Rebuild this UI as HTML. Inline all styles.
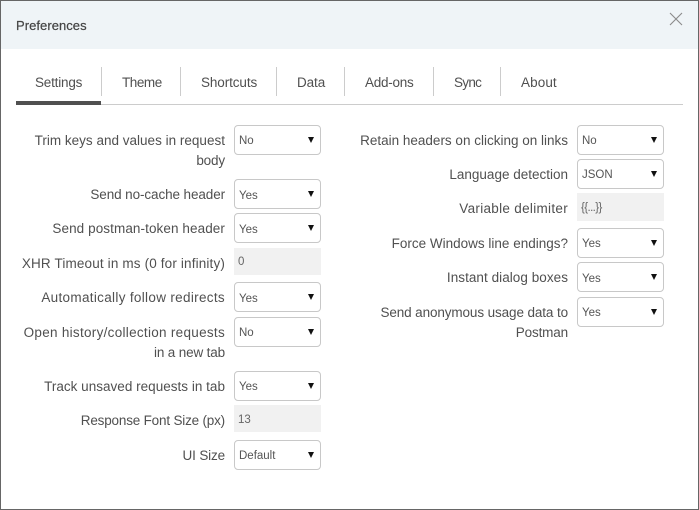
<!DOCTYPE html>
<html><head><meta charset="utf-8">
<style>
html,body{margin:0;padding:0;background:#fff}
#w{position:relative;width:699px;height:510px;overflow:hidden;background:#fff;font-family:"Liberation Sans",sans-serif;color:#505050}
#b{position:absolute;left:0;top:0;width:697px;height:508px;border:1px solid #666}
#h{position:absolute;left:1px;top:1px;width:697px;height:48px;background:#eff4f7}
.a{position:absolute;white-space:nowrap}
.t{font-size:13.5px;line-height:18px;top:74px;letter-spacing:-.1px}
.s{position:absolute;width:1px;height:29px;top:67px;background:#ccc}
.l{position:absolute;font-size:13.5px;line-height:20px;text-align:right;white-space:nowrap;letter-spacing:-.15px;margin-top:1px}
.c{position:absolute;width:85px;height:28px;border:1px solid #c8c8c8;border-radius:4px;background:#fff;font-size:11.5px;line-height:28px;color:#555}
.c span{position:absolute;left:4px;top:1px}
.c span.d{top:2px}
.c i{position:absolute;left:73px;top:11px;width:0;height:0;border-left:3.5px solid transparent;border-right:3.5px solid transparent;border-top:6.5px solid #111}
.n{position:absolute;width:87px;height:27px;background:#f1f1f1;font-size:11.5px;line-height:26px;color:#666}
.n span{position:absolute;left:4px;top:1px}
</style></head><body>
<div id="w">
<div id="b"></div>
<div id="h"></div>
<div class="a" style="left:16px;top:17px;font-size:13px;line-height:18px;letter-spacing:.05px;color:#444;-webkit-text-stroke:.2px #444">Preferences</div>
<svg class="a" style="left:669px;top:12px" width="14" height="14" viewBox="0 0 14 14"><path d="M1 1L13 13M13 1L1 13" stroke="#8a8a8a" stroke-width="1.1" fill="none"/></svg>

<div class="a t" style="left:35px;letter-spacing:-.2px">Settings</div>
<div class="a t" style="left:122px;letter-spacing:-.45px">Theme</div>
<div class="a t" style="left:201px">Shortcuts</div>
<div class="a t" style="left:297px">Data</div>
<div class="a t" style="left:365px;letter-spacing:-.25px">Add-ons</div>
<div class="a t" style="left:454px;letter-spacing:-.7px">Sync</div>
<div class="a t" style="left:521px;letter-spacing:.1px">About</div>
<div class="s" style="left:101px"></div>
<div class="s" style="left:180px"></div>
<div class="s" style="left:276px"></div>
<div class="s" style="left:344px"></div>
<div class="s" style="left:433px"></div>
<div class="s" style="left:500px"></div>
<div class="a" style="left:16px;top:104px;width:667px;height:1px;background:#ccc"></div>
<div class="a" style="left:16px;top:101px;width:85px;height:4px;background:#505050"></div>

<div class="l" style="right:474px;top:130px"><span style="letter-spacing:.01px">Trim keys and values in request</span><br>body</div>
<div class="c" style="left:234px;top:125px"><span>No</span><i></i></div>
<div class="l" style="right:474px;top:184px;letter-spacing:-.1px">Send no-cache header</div>
<div class="c" style="left:234px;top:179px"><span class="d">Yes</span><i></i></div>
<div class="l" style="right:474px;top:218px;letter-spacing:.09px">Send postman-token header</div>
<div class="c" style="left:234px;top:213px"><span class="d">Yes</span><i></i></div>
<div class="l" style="right:474px;top:253px;letter-spacing:.15px">XHR Timeout in ms (0 for infinity)</div>
<div class="n" style="left:234px;top:248px"><span>0</span></div>
<div class="l" style="right:474px;top:287px;letter-spacing:.32px">Automatically follow redirects</div>
<div class="c" style="left:234px;top:282px"><span class="d">Yes</span><i></i></div>
<div class="l" style="right:474px;top:322px"><span style="letter-spacing:.29px">Open history/collection requests</span><br>in a new tab</div>
<div class="c" style="left:234px;top:317px"><span>No</span><i></i></div>
<div class="l" style="right:474px;top:376px;letter-spacing:.02px">Track unsaved requests in tab</div>
<div class="c" style="left:234px;top:371px"><span>Yes</span><i></i></div>
<div class="l" style="right:474px;top:410px;letter-spacing:-.19px">Response Font Size (px)</div>
<div class="n" style="left:234px;top:405px"><span style="top:2px">13</span></div>
<div class="l" style="right:474px;top:445px">UI Size</div>
<div class="c" style="left:234px;top:440px"><span>Default</span><i></i></div>

<div class="l" style="right:131px;top:130px;letter-spacing:0">Retain headers on clicking on links</div>
<div class="c" style="left:577px;top:125px"><span>No</span><i></i></div>
<div class="l" style="right:131px;top:164px;letter-spacing:0">Language detection</div>
<div class="c" style="left:577px;top:159px"><span>JSON</span><i></i></div>
<div class="l" style="right:131px;top:198px;letter-spacing:.3px">Variable delimiter</div>
<div class="n" style="left:577px;top:193px;height:28px"><span style="top:2px;letter-spacing:-.6px">{{...}}</span></div>
<div class="l" style="right:131px;top:233px;letter-spacing:0">Force Windows line endings?</div>
<div class="c" style="left:577px;top:228px"><span>Yes</span><i></i></div>
<div class="l" style="right:131px;top:267px;letter-spacing:.05px">Instant dialog boxes</div>
<div class="c" style="left:577px;top:262px"><span class="d">Yes</span><i></i></div>
<div class="l" style="right:131px;top:302px"><span style="letter-spacing:-.11px">Send anonymous usage data to</span><br>Postman</div>
<div class="c" style="left:577px;top:297px"><span>Yes</span><i></i></div>
</div>
</body></html>
